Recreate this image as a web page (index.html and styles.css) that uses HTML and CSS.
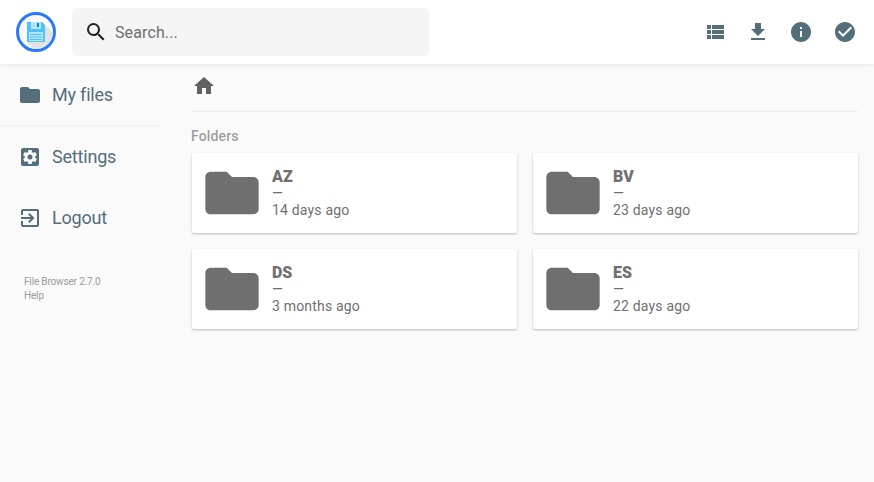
FILE: index.html
```html
<!DOCTYPE html>
<html lang="en">
<head>
<meta charset="utf-8">
<title>File Browser</title>
<link rel="stylesheet" href="styles.css">
</head>
<body>
<header class="topbar">
  <svg class="logo" viewBox="0 0 40 40" width="40" height="40">
    <circle cx="20" cy="20" r="18.500" fill="#fafafa" stroke="#2979ff" stroke-width="3"/>
    <path d="M26 10 L36.970 20.970 A17 17 0 0 1 17.870 36.870 L11 30 Z" fill="#e2e2e2"/>
    <path d="M11 10 H26 L29 13 V30 H11 Z" fill="#4fc3f7"/>
    <rect x="13" y="20" width="14" height="9" fill="#b3e5fc"/>
    <path d="M14 22.500H26M14 25H26M14 27.500H26" stroke="#4fc3f7" stroke-width="1"/>
    <rect x="15" y="10" width="10" height="7" fill="#b3e5fc"/>
    <rect x="21" y="11" width="2" height="4" fill="#0288d1"/>
  </svg>
  <div class="search">
    <svg class="search-icon" viewBox="0 0 24 24" width="24" height="24"><path d="M15.500 14h-.79l-.28-.27A6.470 6.470 0 0 0 16 9.500 6.500 6.500 0 1 0 9.500 16c1.610 0 3.090-.59 4.230-1.570l.27.28v.79l5 4.990L20.490 19l-4.990-5zm-6 0C7.010 14 5 11.990 5 9.500S7.010 5 9.500 5 14 7.010 14 9.500 11.990 14 9.500 14z"/></svg>
    <span class="search-text">Search...</span>
  </div>
  <div class="actions">
    <svg class="icon" viewBox="0 0 24 24" width="24" height="24"><path d="M4 14h4v-4H4v4zm0 5h4v-4H4v4zM4 9h4V5H4v4zm5 5h12v-4H9v4zm0 5h12v-4H9v4zM9 5v4h12V5H9z"/></svg>
    <svg class="icon" viewBox="0 0 24 24" width="24" height="24"><path d="M19 9h-4V3H9v6H5l7 7 7-7zM5 18v2h14v-2H5z"/></svg>
    <svg class="icon" viewBox="0 0 24 24" width="24" height="24"><path d="M12 2C6.480 2 2 6.480 2 12s4.480 10 10 10 10-4.480 10-10S17.520 2 12 2zm1 15h-2v-6h2v6zm0-8h-2V7h2v2z"/></svg>
    <svg class="icon" viewBox="0 0 24 24" width="24" height="24"><path d="M12 2C6.480 2 2 6.480 2 12s4.480 10 10 10 10-4.480 10-10S17.520 2 12 2zm-2 15l-5-5 1.410-1.410L10 14.170l7.590-7.590L19 8l-9 9z"/></svg>
  </div>
</header>
<div class="layout">
  <nav class="sidebar">
    <div class="nav-group nav-first">
      <a class="nav-item">
        <svg class="icon" viewBox="0 0 24 24" width="24" height="24"><path d="M10 4H4c-1.100 0-2 .9-2 2v12c0 1.100.9 2 2 2h16c1.100 0 2-.9 2-2V8c0-1.100-.9-2-2-2h-8l-2-2z"/></svg>
        <span>My files</span>
      </a>
    </div>
    <div class="nav-group">
      <a class="nav-item">
        <svg class="icon" viewBox="0 0 24 24" width="24" height="24"><path d="M19 3H5a2 2 0 0 0-2 2v14a2 2 0 0 0 2 2h14a2 2 0 0 0 2-2V5a2 2 0 0 0-2-2zm-1.750 9c0 .23-.02.46-.05.68l1.480 1.160c.13.110.17.300.08.450l-1.400 2.420c-.09.150-.27.210-.43.150l-1.740-.7c-.36.280-.76.510-1.180.680l-.26 1.850c-.03.170-.18.300-.350.300h-2.800c-.17 0-.32-.13-.35-.29l-.26-1.850c-.43-.18-.82-.4-1.180-.68l-1.740.7c-.16.060-.34 0-.43-.15l-1.400-2.420a.353.353 0 0 1 .08-.45l1.480-1.160c-.03-.23-.05-.46-.05-.69 0-.23.02-.46.05-.68l-1.480-1.160a.353.353 0 0 1-.08-.45l1.400-2.420c.09-.15.27-.21.43-.15l1.740.7c.36-.28.76-.51 1.180-.68l.26-1.850c.03-.17.18-.3.35-.3h2.800c.17 0 .32.130.35.290l.26 1.850c.43.180.82.400 1.180.680l1.740-.7c.16-.06.340 0 .43.150l1.400 2.420c.09.150.050.340-.08.450l-1.480 1.160c.03.230.05.460.05.690zM12 9.500a2.500 2.500 0 1 0 0 5 2.500 2.500 0 0 0 0-5z" fill-rule="evenodd"/></svg>
        <span>Settings</span>
      </a>
      <a class="nav-item">
        <svg class="icon" viewBox="0 0 24 24" width="24" height="24"><path d="M10.090 15.590L11.500 17l5-5-5-5-1.410 1.410L12.670 11H3v2h9.670l-2.580 2.590zM19 3H5a2 2 0 0 0-2 2v4h2V5h14v14H5v-4H3v4a2 2 0 0 0 2 2h14c1.100 0 2-.9 2-2V5c0-1.100-.9-2-2-2z"/></svg>
        <span>Logout</span>
      </a>
    </div>
    <p class="credits"><span>File Browser 2.7.0</span><span>Help</span></p>
  </nav>
  <main class="content">
    <div class="breadcrumbs">
      <svg viewBox="0 0 24 24" width="24" height="24"><path d="M10 20v-6h4v6h5v-8h3L12 3 2 12h3v8z"/></svg>
    </div>
    <h2 class="section-title">Folders</h2>
    <div class="grid">
      <article class="card">
        <svg class="folder" viewBox="0 0 24 24" width="64" height="64"><path d="M10 4H4c-1.100 0-2 .9-2 2v12c0 1.100.9 2 2 2h16c1.100 0 2-.9 2-2V8c0-1.100-.9-2-2-2h-8l-2-2z"/></svg>
        <div class="card-text"><h3>AZ</h3><p class="size">—</p><p class="date">14 days ago</p></div>
      </article>
      <article class="card">
        <svg class="folder" viewBox="0 0 24 24" width="64" height="64"><path d="M10 4H4c-1.100 0-2 .9-2 2v12c0 1.100.9 2 2 2h16c1.100 0 2-.9 2-2V8c0-1.100-.9-2-2-2h-8l-2-2z"/></svg>
        <div class="card-text"><h3>BV</h3><p class="size">—</p><p class="date">23 days ago</p></div>
      </article>
      <article class="card">
        <svg class="folder" viewBox="0 0 24 24" width="64" height="64"><path d="M10 4H4c-1.100 0-2 .9-2 2v12c0 1.100.9 2 2 2h16c1.100 0 2-.9 2-2V8c0-1.100-.9-2-2-2h-8l-2-2z"/></svg>
        <div class="card-text"><h3>DS</h3><p class="size">—</p><p class="date">3 months ago</p></div>
      </article>
      <article class="card">
        <svg class="folder" viewBox="0 0 24 24" width="64" height="64"><path d="M10 4H4c-1.100 0-2 .9-2 2v12c0 1.100.9 2 2 2h16c1.100 0 2-.9 2-2V8c0-1.100-.9-2-2-2h-8l-2-2z"/></svg>
        <div class="card-text"><h3>ES</h3><p class="size">—</p><p class="date">22 days ago</p></div>
      </article>
    </div>
  </main>
</div>
</body>
</html>
```
FILE: styles.css
```css
* { box-sizing: border-box; }
html, body { margin: 0; height: 100%; overflow: hidden; }
body { background: #fafafa; font-family: Roboto, "Liberation Sans", sans-serif; color: #546e7a; }

.topbar {
  height: 64px;
  background: #fff;
  display: flex;
  align-items: center;
  padding: 0 17px 0 16px;
  box-shadow: 0 0 5px rgba(0,0,0,.1);
  position: relative;
}
.logo { flex: none; }
.search {
  margin-left: 16px;
  width: 357px;
  height: 48px;
  background: #f5f5f5;
  border-radius: 5px;
  display: flex;
  align-items: center;
  padding-left: 12px;
}
.search-icon { fill: #212121; }
.search-text { margin-left: 7px; font-size: 16px; color: #6f6f6f; letter-spacing: .12px; }
.actions { margin-left: auto; display: flex; gap: 20px; }
.actions .icon:first-child { margin-right: -1px; }
.actions .icon:nth-child(2) { margin-right: -1px; }
.icon { fill: #546e7a; flex: none; }

.layout { display: flex; }
.sidebar { width: 160px; flex: none; }
.nav-first { border-bottom: 1px solid rgba(0,0,0,.05); height: 62px; }
.nav-item {
  display: flex;
  align-items: center;
  height: 61px;
  padding-left: 18px;
  gap: 10px;
  font-size: 18px;
  letter-spacing: -.2px;
}
.credits {
  margin: 27px 0 0 24px;
  font-size: 10px;
  line-height: 14px;
  color: #9a9a9a;
  letter-spacing: -.16px;
}
.credits span { display: block; }

.content { flex: 1; padding: 0 16px 0 32px; }
.breadcrumbs {
  height: 48px;
  display: flex;
  align-items: center;
  padding-bottom: 4px;
  border-bottom: 1px solid rgba(0,0,0,.05);
  fill: #616161;
}
.section-title {
  margin: 16px 0 9px -1px;
  font-size: 14px;
  line-height: 16px;
  font-weight: 500;
  color: #9e9e9e;
  letter-spacing: .15px;
}
.grid { display: grid; grid-template-columns: 325px 325px; column-gap: 16px; row-gap: 16px; }
.card {
  height: 80px;
  background: #fff;
  border-radius: 2px;
  box-shadow: 0 1px 3px rgba(0,0,0,.12), 0 1px 2px rgba(0,0,0,.14);
  display: flex;
  align-items: center;
  padding-left: 8px;
  color: #6f6f6f;
}
.folder { fill: #6f6f6f; flex: none; }
.card-text { margin-left: 8px; }
.card-text h3 { margin: 0; font-size: 16px; line-height: 19px; font-weight: 900; color: #6f6f6f; }
.card-text p { margin: 0; font-size: 14px; }
.size { line-height: 14px; }
.date { line-height: 20px; letter-spacing: .18px; }
```
